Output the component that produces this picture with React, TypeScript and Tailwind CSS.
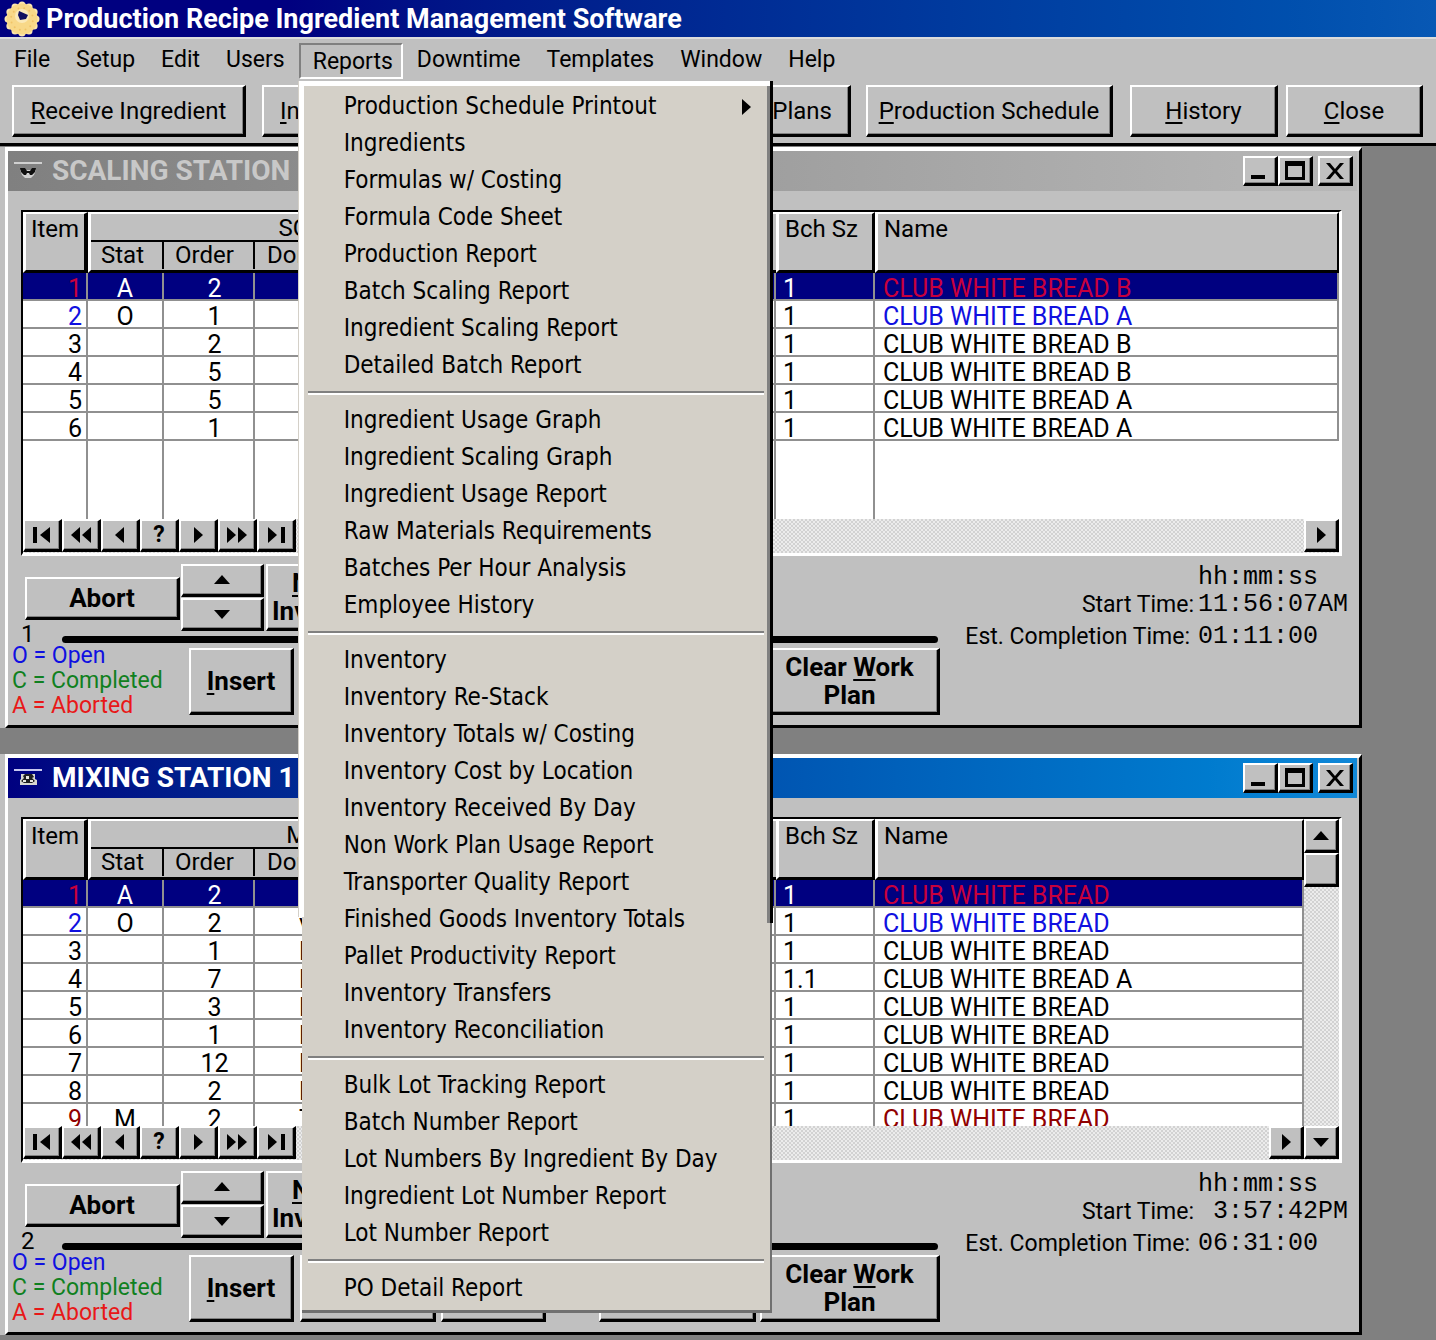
import type { ReactNode } from "react";

const bevel =
  "border-t-2 border-l-2 border-r-3 border-b-3 border-t-white border-l-white border-r-black border-b-black bg-[#c0c0c0] shadow-[inset_-1px_-1px_0_#808080]";

type IconName = "first" | "rewind" | "prev" | "next" | "forward" | "last" | "up" | "down" | "min" | "max" | "close";

const iconPaths: Record<IconName, string> = {
  first: "M3 4h4v16H3zM20 4v16L10 12z",
  rewind: "M11 4v16L2 12zM22 4v16l-9-8z",
  prev: "M16 4v16L7 12z",
  next: "M8 4v16l9-8z",
  forward: "M2 4v16l9-8zM13 4v16l9-8z",
  last: "M4 4v16l9-8zM17 4h4v16h-4z",
  up: "M4 16h16l-8-9z",
  down: "M4 8h16l-8 9z",
  min: "M3 16h14v4H3z",
  max: "M2 2h20v19H2zM5 7v11h14V7z",
  close: "M3 4h4l5 6 5-6h4l-7 8 7 8h-4l-5-6-5 6H3l7-8z",
};

function Icon({ name }: { name: IconName }) {
  return (
    <svg viewBox="0 0 24 24" className="size-6 shrink-0" aria-hidden="true">
      <path d={iconPaths[name]} fill="#000" fillRule="evenodd" />
    </svg>
  );
}

function BevelButton({ className = "", label, children }: { className?: string; label?: string; children?: ReactNode }) {
  return (
    <button type="button" aria-label={label} className={`${bevel} flex items-center justify-center whitespace-nowrap ${className}`}>
      {children}
    </button>
  );
}

function Key({ children }: { children: ReactNode }) {
  return <span className="underline decoration-2 underline-offset-3">{children}</span>;
}

const reportGroups: string[][] = [
  [
    "Production Schedule Printout",
    "Ingredients",
    "Formulas w/ Costing",
    "Formula Code Sheet",
    "Production Report",
    "Batch Scaling Report",
    "Ingredient Scaling Report",
    "Detailed Batch Report",
  ],
  [
    "Ingredient Usage Graph",
    "Ingredient Scaling Graph",
    "Ingredient Usage Report",
    "Raw Materials Requirements",
    "Batches Per Hour Analysis",
    "Employee History",
  ],
  [
    "Inventory",
    "Inventory Re-Stack",
    "Inventory Totals w/ Costing",
    "Inventory Cost by Location",
    "Inventory Received By Day",
    "Non Work Plan Usage Report",
    "Transporter Quality Report",
    "Finished Goods Inventory Totals",
    "Pallet Productivity Report",
    "Inventory Transfers",
    "Inventory Reconciliation",
  ],
  [
    "Bulk Lot Tracking Report",
    "Batch Number Report",
    "Lot Numbers By Ingredient By Day",
    "Ingredient Lot Number Report",
    "Lot Number Report",
  ],
  ["PO Detail Report"],
];

function ReportsMenu() {
  return (
    <div
      role="menu"
      className="absolute top-[38px] left-[3px] z-20 w-[470px] border-r-2 border-b-3 border-[#707070] bg-[#d4d0c8] pt-[7px] pb-[3px] font-['DejaVu_Sans_Condensed','DejaVu_Sans',sans-serif] text-[24px] leading-[37px] text-black"
    >
      <div className="absolute top-0 -left-1 h-[836px] w-[6px] border-l border-[#d4d0c8] bg-white" />
      <div className="absolute top-0 -right-[3px] h-[842px] w-[6px] border-r-3 border-black bg-[#808080]" />
      <div className="absolute top-0 left-0 h-[5px] w-full bg-white" />
      {reportGroups.map((group, g) => (
        <div key={group[0]}>
          {g > 0 && (
            <div role="separator" className="mx-[6px] flex h-[18px] items-center">
              <div className="h-1 w-full border-t-2 border-b-2 border-t-[#808080] border-b-white" />
            </div>
          )}
          {group.map((item, i) => (
            <button key={item} type="button" role="menuitem" className="flex w-full items-center justify-between pr-3 pl-[42px] text-left whitespace-nowrap">
              {item}
              {g === 0 && i === 0 && <Icon name="next" />}
            </button>
          ))}
        </div>
      ))}
    </div>
  );
}

const menuItem = "px-[10px] leading-[34px]";

function MenuBar() {
  return (
    <nav className="flex h-[43px] items-start gap-1.5 border-t-2 border-[#dcdcdc] pt-1 pl-1 text-[23px]">
      <button type="button" className={menuItem}>File</button>
      <button type="button" className={menuItem}>Setup</button>
      <button type="button" className={menuItem}>Edit</button>
      <button type="button" className={menuItem}>Users</button>
      <div className="relative -mr-0.5 -ml-0.5">
        <button
          type="button"
          aria-haspopup="menu"
          aria-expanded="true"
          className="h-9 border-2 border-t-[#808080] border-r-white border-b-white border-l-[#808080] pr-2 pl-3 leading-[34px]"
        >
          Reports
        </button>
        <ReportsMenu />
      </div>
      <button type="button" className={menuItem}>Downtime</button>
      <button type="button" className={menuItem}>Templates</button>
      <button type="button" className={menuItem}>Window</button>
      <button type="button" className={menuItem}>Help</button>
    </nav>
  );
}

function Toolbar() {
  return (
    <div className="flex h-[66px] items-start border-b-3 border-black pt-[5px] pl-3 text-[24px]">
      <BevelButton className="mr-4 h-[52px] w-[234px]">
        <span><Key>R</Key>eceive Ingredient</span>
      </BevelButton>
      <BevelButton className="mr-4 h-[52px] w-[238px]">
        <span className="w-full pl-4 text-left"><Key>I</Key>nventory</span>
      </BevelButton>
      <BevelButton className="mr-[15px] h-[52px] w-[335px]">
        <span className="w-full pr-4 text-right">Work Plans</span>
      </BevelButton>
      <BevelButton className="mr-[17px] h-[52px] w-[247px]">
        <span><Key>P</Key>roduction Schedule</span>
      </BevelButton>
      <BevelButton className="mr-2 h-[52px] w-[148px]">
        <span><Key>H</Key>istory</span>
      </BevelButton>
      <BevelButton className="h-[52px] w-[137px]">
        <span><Key>C</Key>lose</span>
      </BevelButton>
    </div>
  );
}

interface Row {
  item: number;
  stat?: string;
  order: number;
  done?: string;
  size: string;
  name: string;
}

interface Station {
  id: number;
  title: string;
  group: string;
  active: boolean;
  scroll: boolean;
  start: string;
  completion: string;
  rows: Row[];
}

const stations: Station[] = [
  {
    id: 1,
    title: "SCALING STATION",
    group: "SCALING STATION 1",
    active: false,
    scroll: false,
    start: "11:56:07AM",
    completion: "01:11:00",
    rows: [
      { item: 1, stat: "A", order: 2, size: "1", name: "CLUB WHITE BREAD B" },
      { item: 2, stat: "O", order: 1, size: "1", name: "CLUB WHITE BREAD A" },
      { item: 3, order: 2, size: "1", name: "CLUB WHITE BREAD B" },
      { item: 4, order: 5, size: "1", name: "CLUB WHITE BREAD B" },
      { item: 5, order: 5, size: "1", name: "CLUB WHITE BREAD A" },
      { item: 6, order: 1, size: "1", name: "CLUB WHITE BREAD A" },
    ],
  },
  {
    id: 2,
    title: "MIXING STATION 1",
    group: "MIXING STATION 1",
    active: true,
    scroll: true,
    start: " 3:57:42PM",
    completion: "06:31:00",
    rows: [
      { item: 1, stat: "A", order: 2, size: "1", name: "CLUB WHITE BREAD" },
      { item: 2, stat: "O", order: 2, done: "v", size: "1", name: "CLUB WHITE BREAD" },
      { item: 3, order: 1, done: "M", size: "1", name: "CLUB WHITE BREAD" },
      { item: 4, order: 7, done: "M", size: "1.1", name: "CLUB WHITE BREAD A" },
      { item: 5, order: 3, done: "M", size: "1", name: "CLUB WHITE BREAD" },
      { item: 6, order: 1, done: "M", size: "1", name: "CLUB WHITE BREAD" },
      { item: 7, order: 12, done: "M", size: "1", name: "CLUB WHITE BREAD" },
      { item: 8, order: 2, done: "M", size: "1", name: "CLUB WHITE BREAD" },
      { item: 9, stat: "M", order: 2, done: "T", size: "1", name: "CLUB WHITE BREAD" },
    ],
  },
];

function accent(row: Row) {
  if (row.stat === "A") return "text-[#c8003c]";
  if (row.stat === "O") return "text-[#1010e0]";
  if (row.stat === "M") return "text-[#900000]";
  return "";
}

const cell = "h-7 border-r-2 border-b-2 border-[#909090] p-0 pt-[5px]";
const head = "border-t-2 border-l-3 border-white bg-[#c0c0c0] p-0 align-top font-normal";

function Grid({ station }: { station: Station }) {
  return (
    <table className="w-full table-fixed border-separate border-spacing-0 bg-white text-[25px] leading-[21px]">
      <colgroup>
        <col className="w-[65px]" />
        <col className="w-[76px]" />
        <col className="w-[91px]" />
        <col className="w-[431px]" />
        <col className="w-[90px]" />
        <col className="w-[99px]" />
        <col />
      </colgroup>
      <thead className="text-[24px]">
        <tr className="h-[29px]">
          <th rowSpan={2} className={`${head} border-r-4 border-b-3 border-r-black border-b-black pt-0.5 leading-[26px]`}>Item</th>
          <th colSpan={3} className={`${head} pt-0.5`}>
            <div className="border-b-2 border-black leading-[24px]">{station.group}</div>
          </th>
          <th rowSpan={2} className={`${head} border-b-3 border-b-black`} />
          <th rowSpan={2} className={`${head} border-r-3 border-b-3 border-r-black border-b-black pt-0.5 pl-1.5 text-left leading-[26px] whitespace-nowrap`}>Bch Sz</th>
          <th rowSpan={2} className={`${head} border-r-2 border-b-3 border-r-black border-b-black pt-0.5 pl-1.5 text-left leading-[26px]`}>Name</th>
        </tr>
        <tr className="h-[31px] leading-[27px]">
          <th className="border-b-3 border-l-3 border-b-black border-l-white bg-[#c0c0c0] p-0 pb-px font-normal">
            <div className="border-r-2 border-black pr-2">Stat</div>
          </th>
          <th className="border-b-3 border-b-black bg-[#c0c0c0] p-0 pb-px font-normal">
            <div className="border-r-2 border-black pr-2">Order</div>
          </th>
          <th className="border-b-3 border-b-black bg-[#c0c0c0] p-0 pb-px pl-3 text-left font-normal">Done</th>
        </tr>
      </thead>
      <tbody>
        {station.rows.map((row, i) => (
          <tr key={row.item} className={i === 0 ? "bg-[#000080] text-white" : "text-black"}>
            <td className={`${cell} ${accent(row)} pr-1 text-right`}>{row.item}</td>
            <td className={`${cell} text-center`}>{row.stat}</td>
            <td className={`${cell} pl-3 text-center`}>{row.order}</td>
            <td className={`${cell} pl-11`}>{row.done}</td>
            <td className={cell} />
            <td className={`${cell} pl-[7px]`}>{row.size}</td>
            <td className={`${cell} ${accent(row)} border-r-0 pl-2 whitespace-nowrap`}>{row.name}</td>
          </tr>
        ))}
        {!station.scroll && (
          <tr className="h-20">
            {[0, 1, 2, 3, 4, 5].map((n) => (
              <td key={n} className="border-r-2 border-[#909090]" />
            ))}
            <td />
          </tr>
        )}
      </tbody>
    </table>
  );
}

const checker = "bg-[repeating-conic-gradient(#d2d2d2_0_25%,#ececec_0_50%)] bg-[length:4px_4px]";

const navIcons: { name: IconName; label: string }[] = [
  { name: "first", label: "First" },
  { name: "rewind", label: "Page back" },
  { name: "prev", label: "Previous" },
  { name: "next", label: "Next" },
  { name: "forward", label: "Page forward" },
  { name: "last", label: "Last" },
];

function NavButtons() {
  const buttons = navIcons.map((icon) => (
    <BevelButton key={icon.name} label={icon.label} className="h-[33px] w-[39px]">
      <Icon name={icon.name} />
    </BevelButton>
  ));
  buttons.splice(
    3,
    0,
    <BevelButton key="find" className="h-[33px] w-[39px] text-[23px] font-bold">?</BevelButton>,
  );
  return <div className="flex">{buttons}</div>;
}

function StationIcon({ active }: { active: boolean }) {
  return (
    <svg viewBox="0 0 28 20" className="h-5 w-7" aria-hidden="true">
      <path d="M0 1h28v2H0z" fill={active ? "#c8c8f0" : "#d0d0d0"} />
      {active ? (
        <>
          <path d="M7 6h14v5l2 1v5H6v-5l1-1z" fill="#d8d8d0" />
          <path d="M11 6h7l2 3-2 1 3 3-3 2h-8l-3-2 3-3-1-2z" fill="#202020" />
          <path d="M12 8h3v3h-3zM9 12h3v2H9zM16 12h3v2h-3z" fill="#e8e8e0" />
        </>
      ) : (
        <>
          <path d="M6 9h16l-2 5-3 3h-6l-3-3z" fill="#d0d0d0" />
          <path d="M6 7h5l2 3h3l2-3h4l-1 4-3 3h-2l-1-2h-2l-1 2h-2l-3-3z" fill="#101010" />
        </>
      )}
    </svg>
  );
}

function StationWindow({ station }: { station: Station }) {
  return (
    <section className="mr-[74px] border-l-5 border-[#c0c0c0]">
      <div className="border-t-4 border-r-3 border-b-3 border-l-3 border-t-white border-r-black border-b-black border-l-white bg-[#c0c0c0]">
        <header
          className={`mr-0.5 flex h-10 items-center pr-1 pl-1.5 ${
            station.active
              ? "bg-linear-to-r from-[#000080] to-[#1088d8] text-white"
              : "bg-linear-to-r from-[#808080] to-[#b8b8b8] text-[#c8c8c8]"
          }`}
        >
          <StationIcon active={station.active} />
          <h2 className="ml-[10px] flex-1 text-[28px] leading-10 font-bold">{station.title}</h2>
          <BevelButton label="Minimize" className="h-[30px] w-[35px]"><Icon name="min" /></BevelButton>
          <BevelButton label="Maximize" className="h-[30px] w-[35px]"><Icon name="max" /></BevelButton>
          <BevelButton label="Close" className="ml-[5px] h-[30px] w-[35px]"><Icon name="close" /></BevelButton>
        </header>

        <div className="mt-[19px] mr-[17px] ml-[13px] border-t-2 border-r-3 border-b-3 border-l-2 border-t-black border-r-white border-b-white border-l-black">
          <div className="flex h-[307px] overflow-hidden">
            <div className="min-w-0 flex-1">
              <Grid station={station} />
            </div>
            {station.scroll && (
              <div className={`${checker} w-[35px]`}>
                <BevelButton label="Scroll up" className="h-[34px] w-full"><Icon name="up" /></BevelButton>
                <div className={`${bevel} h-[34px]`} />
              </div>
            )}
          </div>
          <div className={`${checker} flex h-[34px] justify-between`}>
            <NavButtons />
            <div className="flex">
              <BevelButton label="Scroll right" className="h-[33px] w-[35px]"><Icon name="next" /></BevelButton>
              {station.scroll && (
                <BevelButton label="Scroll down" className="h-[33px] w-[35px]"><Icon name="down" /></BevelButton>
              )}
            </div>
          </div>
        </div>

        <div className="flex justify-between pb-[7px]">
          <div className="text-[26px]">
            <div className="flex h-[75px] items-start pt-2 pl-[17px] font-bold">
              <BevelButton className="mt-[13px] h-[43px] w-[155px]">Abort</BevelButton>
              <div className="mr-0.5 ml-px flex flex-col gap-px">
                <BevelButton label="Move up" className="h-[33px] w-[83px]"><Icon name="up" /></BevelButton>
                <BevelButton label="Move down" className="h-[33px] w-[83px]"><Icon name="down" /></BevelButton>
              </div>
              <BevelButton className="h-[67px] w-36 leading-7">
                <span className="w-full pl-1 text-left">
                  <span className="pl-5"><Key>N</Key>ew</span>
                  <br />
                  Inventory
                </span>
              </BevelButton>
            </div>
            <div className="flex h-[17px] items-center pl-[13px]">
              <span className="w-[41px] self-start text-[24px] leading-[6px]">{station.id}</span>
              <div className="h-[7px] w-[876px] rounded-sm bg-black" />
            </div>
            <div className="flex items-start pl-1 font-bold">
              <ul className="-mt-[5px] w-[177px] text-[23px] leading-[25px] font-normal whitespace-nowrap">
                <li className="text-[#1010e0]">O = Open</li>
                <li className="text-[#108020]">C = Completed</li>
                <li className="text-[#e81818]">A = Aborted</li>
              </ul>
              <BevelButton className="mr-[6px] h-[67px] w-[105px]"><span><Key>I</Key>nsert</span></BevelButton>
              <BevelButton className="mr-[5px] h-[67px] w-[136px]" />
              <BevelButton className="mr-[53px] h-[67px] w-[105px]" />
              <BevelButton className="mr-1 h-[67px] w-[157px]" />
              <BevelButton className="h-[67px] w-[180px] leading-7">
                <span>Clear <Key>W</Key>ork<br />Plan</span>
              </BevelButton>
            </div>
          </div>

          <dl className="grid shrink-0 grid-cols-[auto_151px] content-start gap-x-1 pt-2 pr-[10px] text-[23px] leading-[27px] whitespace-pre">
            <dt />
            <dd className="font-['Liberation_Mono',monospace] text-[25px]">hh:mm:ss</dd>
            <dt className="text-right">Start Time:</dt>
            <dd className="font-['Liberation_Mono',monospace] text-[25px]">{station.start}</dd>
            <dt className="pr-1 text-right leading-[37px]">Est. Completion Time:</dt>
            <dd className="font-['Liberation_Mono',monospace] text-[25px] leading-[37px]">{station.completion}</dd>
          </dl>
        </div>
      </div>
    </section>
  );
}

function CookieLogo() {
  const bumps = Array.from({ length: 12 }, (_, i) => (i * Math.PI) / 6);
  return (
    <svg viewBox="0 0 36 36" className="size-9" aria-hidden="true">
      {bumps.map((a) => (
        <circle key={a} cx={18 + 14 * Math.cos(a)} cy={18 + 14 * Math.sin(a)} r="3.5" fill="#fbe6b0" />
      ))}
      <circle cx="18" cy="18" r="15.5" fill="#f8d888" />
      {bumps.map((a) => (
        <circle key={a} cx={18 + 11 * Math.cos(a + 0.2)} cy={18 + 11 * Math.sin(a + 0.2)} r="1" fill="#f0c468" />
      ))}
      <circle cx="18" cy="15" r="7" fill="#fbe9b8" />
      <path d="M15 10l9 4-2 4-6 1-2-5z" fill="#101060" />
    </svg>
  );
}

export default function App() {
  return (
    <div className="flex min-h-screen flex-col overflow-x-hidden bg-[#808080] font-['Roboto',sans-serif] text-black">
      <div className="bg-[#c0c0c0]">
        <header className="flex h-[37px] items-center bg-linear-to-r from-[#000080] from-20% to-[#0858b4] pl-1 text-white">
          <CookieLogo />
          <h1 className="ml-1.5 text-[27px] leading-9 font-bold whitespace-nowrap">Production Recipe Ingredient Management Software</h1>
        </header>
        <MenuBar />
        <Toolbar />
      </div>
      <main className="flex flex-col gap-[26px] pt-px">
        {stations.map((station) => (
          <StationWindow key={station.id} station={station} />
        ))}
      </main>
    </div>
  );
}
